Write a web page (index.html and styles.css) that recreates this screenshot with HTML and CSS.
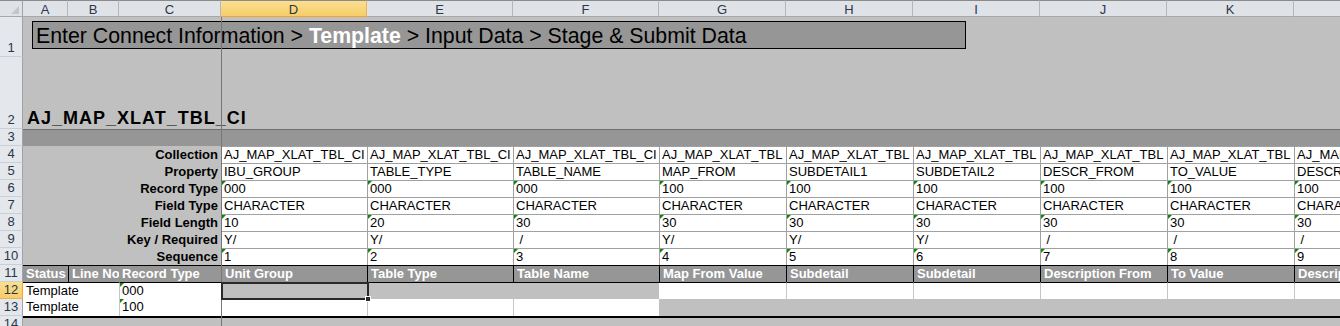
FILE: index.html
```html
<!DOCTYPE html>
<html>
<head>
<meta charset="utf-8">
<title>AJ_MAP_XLAT_TBL_CI</title>
<link rel="stylesheet" href="styles.css">
</head>
<body>
<div class="sheet">
  <div class="corner"></div>
  <div class="ch">A</div><div class="ch">B</div><div class="ch">C</div><div class="ch sel">D</div><div class="ch">E</div><div class="ch">F</div><div class="ch">G</div><div class="ch">H</div><div class="ch">I</div><div class="ch">J</div><div class="ch">K</div><div class="ch">L</div>

  <div class="rh">1</div>
  <div class="banner-row"><div class="banner">Enter Connect Information &gt; <b>Template</b> &gt; Input Data &gt; Stage &amp; Submit Data</div></div>

  <div class="rh">2</div>
  <div class="title-row">AJ_MAP_XLAT_TBL_CI</div>

  <div class="rh">3</div>
  <div class="band"></div>

  <div class="rh">4</div>
  <div class="label">Collection</div>
  <div class="d">AJ_MAP_XLAT_TBL_CI</div><div class="d">AJ_MAP_XLAT_TBL_CI</div><div class="d">AJ_MAP_XLAT_TBL_CI</div><div class="d">AJ_MAP_XLAT_TBL</div><div class="d">AJ_MAP_XLAT_TBL</div><div class="d">AJ_MAP_XLAT_TBL</div><div class="d">AJ_MAP_XLAT_TBL</div><div class="d">AJ_MAP_XLAT_TBL</div><div class="d">AJ_MAP_XLAT_TBL</div>

  <div class="rh">5</div>
  <div class="label">Property</div>
  <div class="d">IBU_GROUP</div><div class="d">TABLE_TYPE</div><div class="d">TABLE_NAME</div><div class="d">MAP_FROM</div><div class="d">SUBDETAIL1</div><div class="d">SUBDETAIL2</div><div class="d">DESCR_FROM</div><div class="d">TO_VALUE</div><div class="d">DESCR_TO</div>

  <div class="rh">6</div>
  <div class="label">Record Type</div>
  <div class="d t">000</div><div class="d t">000</div><div class="d t">000</div><div class="d t">100</div><div class="d t">100</div><div class="d t">100</div><div class="d t">100</div><div class="d t">100</div><div class="d t">100</div>

  <div class="rh">7</div>
  <div class="label">Field Type</div>
  <div class="d">CHARACTER</div><div class="d">CHARACTER</div><div class="d">CHARACTER</div><div class="d">CHARACTER</div><div class="d">CHARACTER</div><div class="d">CHARACTER</div><div class="d">CHARACTER</div><div class="d">CHARACTER</div><div class="d">CHARACTER</div>

  <div class="rh">8</div>
  <div class="label">Field Length</div>
  <div class="d t">10</div><div class="d t">20</div><div class="d t">30</div><div class="d t">30</div><div class="d t">30</div><div class="d t">30</div><div class="d t">30</div><div class="d t">30</div><div class="d t">30</div>

  <div class="rh">9</div>
  <div class="label">Key / Required</div>
  <div class="d">Y/</div><div class="d">Y/</div><div class="d"> /</div><div class="d">Y/</div><div class="d">Y/</div><div class="d">Y/</div><div class="d"> /</div><div class="d"> /</div><div class="d"> /</div>

  <div class="rh">10</div>
  <div class="label">Sequence</div>
  <div class="d t">1</div><div class="d t">2</div><div class="d t">3</div><div class="d t">4</div><div class="d t">5</div><div class="d t">6</div><div class="d t">7</div><div class="d t">8</div><div class="d t">9</div>

  <div class="rh">11</div>
  <div class="h">Status</div><div class="h sep">Line No</div><div class="h">Record Type</div><div class="h sep">Unit Group</div><div class="h sep">Table Type</div><div class="h sep">Table Name</div><div class="h sep">Map From Value</div><div class="h sep">Subdetail</div><div class="h sep">Subdetail</div><div class="h sep">Description From</div><div class="h sep">To Value</div><div class="h sep">Description To</div>

  <div class="rh sel">12</div>
  <div class="e w top span2">Template</div><div class="e w top vl t">000</div><div class="e g top"></div><div class="e g top"></div><div class="e g top"></div><div class="e w top"></div><div class="e w top vl"></div><div class="e w top vl"></div><div class="e w top vl"></div><div class="e w top vl"></div><div class="e w top vl"></div>

  <div class="rh">13</div>
  <div class="e w span2">Template</div><div class="e w vl t">100</div><div class="e w"></div><div class="e w vl"></div><div class="e w vl"></div><div class="e g"></div><div class="e g"></div><div class="e g"></div><div class="e g"></div><div class="e g"></div><div class="e g"></div>

  <div class="rh">14</div>
  <div class="band end"></div>
</div>
<div class="freeze"></div>
<div class="selection"><span class="handle"></span></div>
</body>
</html>
```

FILE: styles.css
```css
* { box-sizing: border-box; }

body {
  margin: 0;
  width: 1340px;
  height: 326px;
  overflow: hidden;
  position: relative;
  background: #c0c0c0;
  font-family: "Liberation Sans", Arial, sans-serif;
  color: #000;
}

.sheet {
  display: grid;
  grid-template-columns: 23px 45px 51px 102px 146px 146px 146px 127px 127px 127px 127px 127px 127px;
  grid-template-rows: 17px 40px 72px repeat(12, 17px);
  width: 1421px;
}

/* headers */
.corner {
  position: relative;
  background: #dfe3e8;
  border-top: 1px solid #8a8a8a;
  border-right: 1px solid #9ea3a9;
  border-bottom: 1px solid #a5a9ae;
}
.corner::after {
  content: "";
  position: absolute;
  right: 3px;
  bottom: 2px;
  border-left: 8px solid transparent;
  border-bottom: 8px solid #c3c7cc;
}

.ch {
  background: #dfe3e8;
  border-top: 1px solid #8a8a8a;
  border-bottom: 1px solid #a5a9ae;
  border-right: 1px solid #b4b8bd;
  font-size: 13px;
  line-height: 16px;
  padding-top: 1px;
  text-align: center;
  color: #2a3649;
}
.ch.sel {
  background: linear-gradient(#fadf8f, #f6cd6a);
  border-bottom-color: #f1a23a;
  border-right-color: #e9b262;
}

.rh {
  display: flex;
  align-items: flex-end;
  justify-content: center;
  background: #e4e7eb;
  border-right: 1px solid #9ea3a9;
  border-bottom: 1px solid #cbcfd4;
  font-size: 13px;
  line-height: 16px;
  color: #2a3649;
}
.rh.sel {
  background: linear-gradient(#fadf8f, #f6cd6a);
  border-right-color: #f1a23a;
  border-bottom-color: #e9b262;
}

/* row 1 banner */
.banner-row {
  grid-column: 2 / -1;
  padding: 4px 0 0 9px;
}
.banner {
  width: 934px;
  height: 28px;
  border: 1px solid #000;
  background: #969696;
  font-size: 21.3px;
  line-height: 24px;
  padding: 2px 0 0 3px;
  white-space: nowrap;
}
.banner b { color: #fff; }

/* row 2 title */
.title-row {
  grid-column: 2 / -1;
  display: flex;
  align-items: flex-end;
  padding: 0 0 1px 4px;
  font-size: 18px;
  line-height: 20px;
  letter-spacing: 1px;
  font-weight: bold;
}

/* row 3 band */
.band {
  grid-column: 2 / -1;
  background: #969696;
  border-top: 1px solid #6e6e6e;
}
.band.end {
  background: #c0c0c0;
  border-top: 2px solid #000;
}

/* property rows */
.label {
  grid-column: span 3;
  text-align: right;
  font-weight: bold;
  font-size: 13px;
  line-height: 16px;
  padding: 1px 3px 0 0;
  white-space: nowrap;
}
.d {
  position: relative;
  background: #fff;
  border-left: 1px solid #a0a0a0;
  border-top: 1px solid #a0a0a0;
  font-size: 13px;
  line-height: 16px;
  padding: 0 0 0 2px;
  white-space: pre;
  overflow: hidden;
}
.t::before {
  content: "";
  position: absolute;
  left: 0;
  top: 0;
  border-top: 4px solid #0a8a0a;
  border-right: 4px solid transparent;
}

/* row 11 headers */
.h {
  background: #969696;
  color: #fff;
  font-weight: bold;
  font-size: 13px;
  line-height: 16px;
  padding: 0 0 0 3px;
  border-top: 1px solid #000;
  white-space: nowrap;
  overflow: hidden;
}
.h.sep { border-left: 1px solid #000; }

/* entry rows */
.e {
  position: relative;
  font-size: 13px;
  line-height: 16px;
  padding: 0 0 0 3px;
  white-space: nowrap;
  overflow: hidden;
}
.e.top { border-top: 1px solid #000; }
.e.w { background: #fff; }
.e.g { background: #c0c0c0; }
.e.vl { border-left: 1px solid #c6c6c6; padding-left: 2px; }
.span2 { grid-column: span 2; }

/* overlays */
.freeze {
  position: absolute;
  left: 221px;
  top: 17px;
  bottom: 0;
  width: 1px;
  background: #767676;
}
.selection {
  position: absolute;
  left: 221px;
  top: 282px;
  width: 148px;
  height: 18px;
  border: 2px solid #2a2a2a;
}
.handle {
  position: absolute;
  right: -4px;
  bottom: -4px;
  width: 6px;
  height: 6px;
  background: #2a2a2a;
  border: 1px solid #fff;
}
```
